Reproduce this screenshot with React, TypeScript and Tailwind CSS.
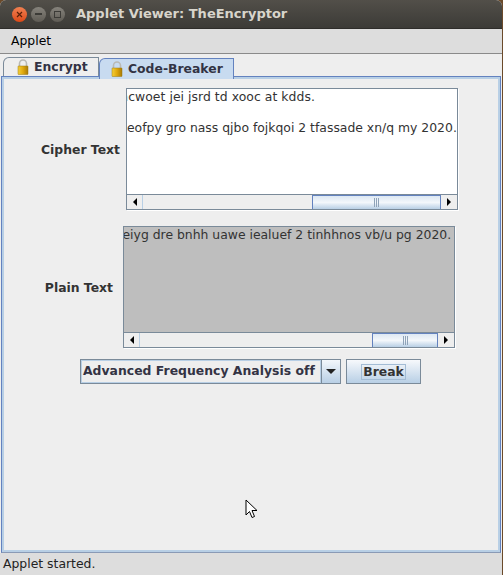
import React from 'react';

const font = { fontFamily: '"DejaVu Sans", sans-serif' };

// Padlock shown on both tabs
const LockIcon = () => (
    <svg width="14" height="16" viewBox="0 0 14 16" className="shrink-0">
        <path d="M3.5 8V4.5a3.5 3.5 0 0 1 7 0V8" fill="none" stroke="#b9b9b4" strokeWidth="1.6" />
        <defs>
            <linearGradient id="lockBody" x1="0" y1="0" x2="1" y2="0">
                <stop offset="0" stopColor="#f4cf3a" />
                <stop offset="0.5" stopColor="#e0a80c" />
                <stop offset="1" stopColor="#a87a06" />
            </linearGradient>
        </defs>
        <rect x="2" y="7" width="10" height="8.5" rx="0.5" fill="url(#lockBody)" stroke="#9a7a10" strokeWidth="0.5" />
    </svg>
);

const Arrow = ({ dir }: { dir: 'left' | 'right' | 'down' }) => {
    if (dir === 'left') return <div className="w-0 h-0 border-y-[4px] border-y-transparent border-r-[4px] border-r-black" />;
    if (dir === 'right') return <div className="w-0 h-0 border-y-[4px] border-y-transparent border-l-[4px] border-l-black" />;
    return <div className="w-0 h-0 border-x-[5px] border-x-transparent border-t-[5px] border-t-[#222]" />;
};

const ScrollBar = ({ thumb, button }: { thumb: string; button: string }) => (
    <div className="flex h-[15px] shrink-0 border-t border-[#7a8a99] bg-[#eeeeee]">
        <div className={`${button} flex items-center justify-center border-r border-[#b8cfe5] bg-[#eeeeee]`}>
            <Arrow dir="left" />
        </div>
        <div className="flex-1" />
        <div className={`${thumb} flex items-center justify-center gap-px border-x border-t border-[#6382bf] bg-gradient-to-b from-[#dde8f3] via-[#f3f7fb] to-[#b8cfe5]`}>
            <div className="w-px h-[9px] bg-[#8fa3b8]" />
            <div className="w-px h-[9px] bg-[#8fa3b8]" />
            <div className="w-px h-[9px] bg-[#8fa3b8]" />
        </div>
        <div className={`${button} flex items-center justify-center bg-[#eeeeee]`}>
            <Arrow dir="right" />
        </div>
    </div>
);

export default function App() {
    return (
        <div className="relative w-[503px] h-[575px] overflow-hidden bg-[#6b4a2a] text-[12.4px] text-[#333333]" style={font}>
            <div className="flex flex-col w-[502px] h-[575px] rounded-t-[6px] overflow-hidden bg-[#eeeeee]">
                {/* Title bar */}
                <div className="flex items-center h-[29px] shrink-0 pl-[12px] bg-gradient-to-b from-[#524f49] to-[#3c3b37] border-b border-[#2e2d2a]">
                    <div className="flex items-center gap-[4px] w-[64px]">
                        <div className="flex items-center justify-center w-[15px] h-[15px] rounded-full bg-gradient-to-b from-[#f08050] to-[#dd4814] text-[#5a2008]">
                            <svg width="7" height="7" viewBox="0 0 7 7"><path d="M1 1l5 5M6 1l-5 5" stroke="#5a2008" strokeWidth="1.2" /></svg>
                        </div>
                        <div className="flex items-center justify-center w-[15px] h-[15px] rounded-full bg-gradient-to-b from-[#86837c] to-[#5f5c55]">
                            <div className="w-[7px] h-[2px] bg-[#3c3b37]" />
                        </div>
                        <div className="flex items-center justify-center w-[15px] h-[15px] rounded-full bg-gradient-to-b from-[#86837c] to-[#5f5c55]">
                            <div className="w-[7px] h-[7px] border border-[#3c3b37]" />
                        </div>
                    </div>
                    <span className="text-[13px] font-bold text-[#d8d5cc] whitespace-nowrap">Applet Viewer: TheEncryptor</span>
                </div>

                {/* Menu bar */}
                <div className="flex items-center h-[25px] shrink-0 pl-[11px] bg-[#dddddd] border-b border-[#8a8a8a] text-black">
                    Applet
                </div>

                {/* Tabs */}
                <div className="flex items-end h-[22px] shrink-0 pl-[3px] bg-[#eeeeee] font-bold">
                    <div className="flex items-center gap-[4px] w-[96px] h-[19px] pl-[12px] rounded-tl-[6px] border border-b-0 border-[#7a8a99] bg-[#eeeeee] text-[#333344]">
                        <LockIcon />
                        Encrypt
                    </div>
                    <div className="relative z-10 flex items-center gap-[4px] w-[135px] h-[21px] -mb-[3px] pl-[10px] rounded-tl-[6px] border border-b-0 border-[#6382bf] bg-[#c8dbf0] text-[#333344]">
                        <LockIcon />
                        Code-Breaker
                    </div>
                </div>

                {/* Tab panel */}
                <div className="flex flex-col flex-1 mx-[1px] border border-[#6382bf] border-b-[#8a9ab5]">
                    <div className="flex flex-col flex-1 border-2 border-[#b8cfe5] bg-[#eeeeee] pt-[9px]">
                        {/* Cipher Text row */}
                        <div className="flex items-center h-[122px] shrink-0">
                            <div className="w-[116px] pt-[2px] text-right font-bold">Cipher Text</div>
                            <div className="flex flex-col w-[332px] h-[122px] ml-[6px] border border-[#7a8a99] bg-white shadow-[1px_1px_0_#ffffff]">
                                <div className="flex-1 overflow-hidden whitespace-nowrap leading-[16px]">
                                    <div className="-ml-[6.5px] tracking-[0.05px]">acwoet jei jsrd td xooc at kdds.</div>
                                    <div className="mt-[15px]">eofpy gro nass qjbo fojkqoi 2 tfassade xn/q my 2020.</div>
                                </div>
                                <ScrollBar thumb="w-[129px]" button="w-[16px]" />
                            </div>
                        </div>
                        {/* Plain Text row */}
                        <div className="flex items-center h-[122px] shrink-0 mt-[16px]">
                            <div className="w-[109px] pt-[2px] text-right font-bold">Plain Text</div>
                            <div className="flex flex-col w-[332px] h-[122px] ml-[10px] border border-[#7a8a99] bg-[#bebebe] shadow-[1px_1px_0_#ffffff]">
                                <div className="flex-1 overflow-hidden whitespace-nowrap leading-[16px]">
                                    <div className="-ml-[1.5px]">eiyg dre bnhh uawe iealuef 2 tinhhnos vb/u pg 2020.</div>
                                </div>
                                <ScrollBar thumb="w-[66px]" button="w-[16px]" />
                            </div>
                        </div>
                        {/* Controls */}
                        <div className="flex items-start mt-[11px] pl-[76px] font-bold">
                            <div className="flex w-[261px] h-[25px] border border-[#7a8a99] bg-[#eeeeee]">
                                <div className="flex items-center flex-1 pl-px border border-[#b8cfe5] whitespace-nowrap text-[#333344] tracking-[0.02px]">
                                    Advanced Frequency Analysis off
                                </div>
                                <div className="flex items-center justify-center w-[19px] border-l border-[#7a8a99] bg-gradient-to-b from-[#f3f7fb] to-[#b8cfe5]">
                                    <Arrow dir="down" />
                                </div>
                            </div>
                            <div className="flex items-center justify-center w-[75px] h-[25px] ml-[5px] border border-[#7a8a99] bg-gradient-to-b from-[#f7f9fc] to-[#b8cfe5]">
                                <span className="px-px border border-[#a3bcd5] leading-[14px]">Break</span>
                            </div>
                        </div>
                    </div>
                </div>

                {/* Status bar */}
                <div className="flex items-center h-[22px] shrink-0 pl-[3px] bg-[#dddddd] text-[#222222]">
                    Applet started.
                </div>
            </div>

            {/* Mouse pointer over the panel */}
            <svg width="14" height="20" viewBox="0 0 14 20" className="absolute left-[245px] top-[499px]">
                <path d="M1 1v15l3.5-3.5 2.5 6 2.5-1-2.5-6h5z" fill="white" stroke="black" strokeWidth="1" />
            </svg>
        </div>
    );
}
